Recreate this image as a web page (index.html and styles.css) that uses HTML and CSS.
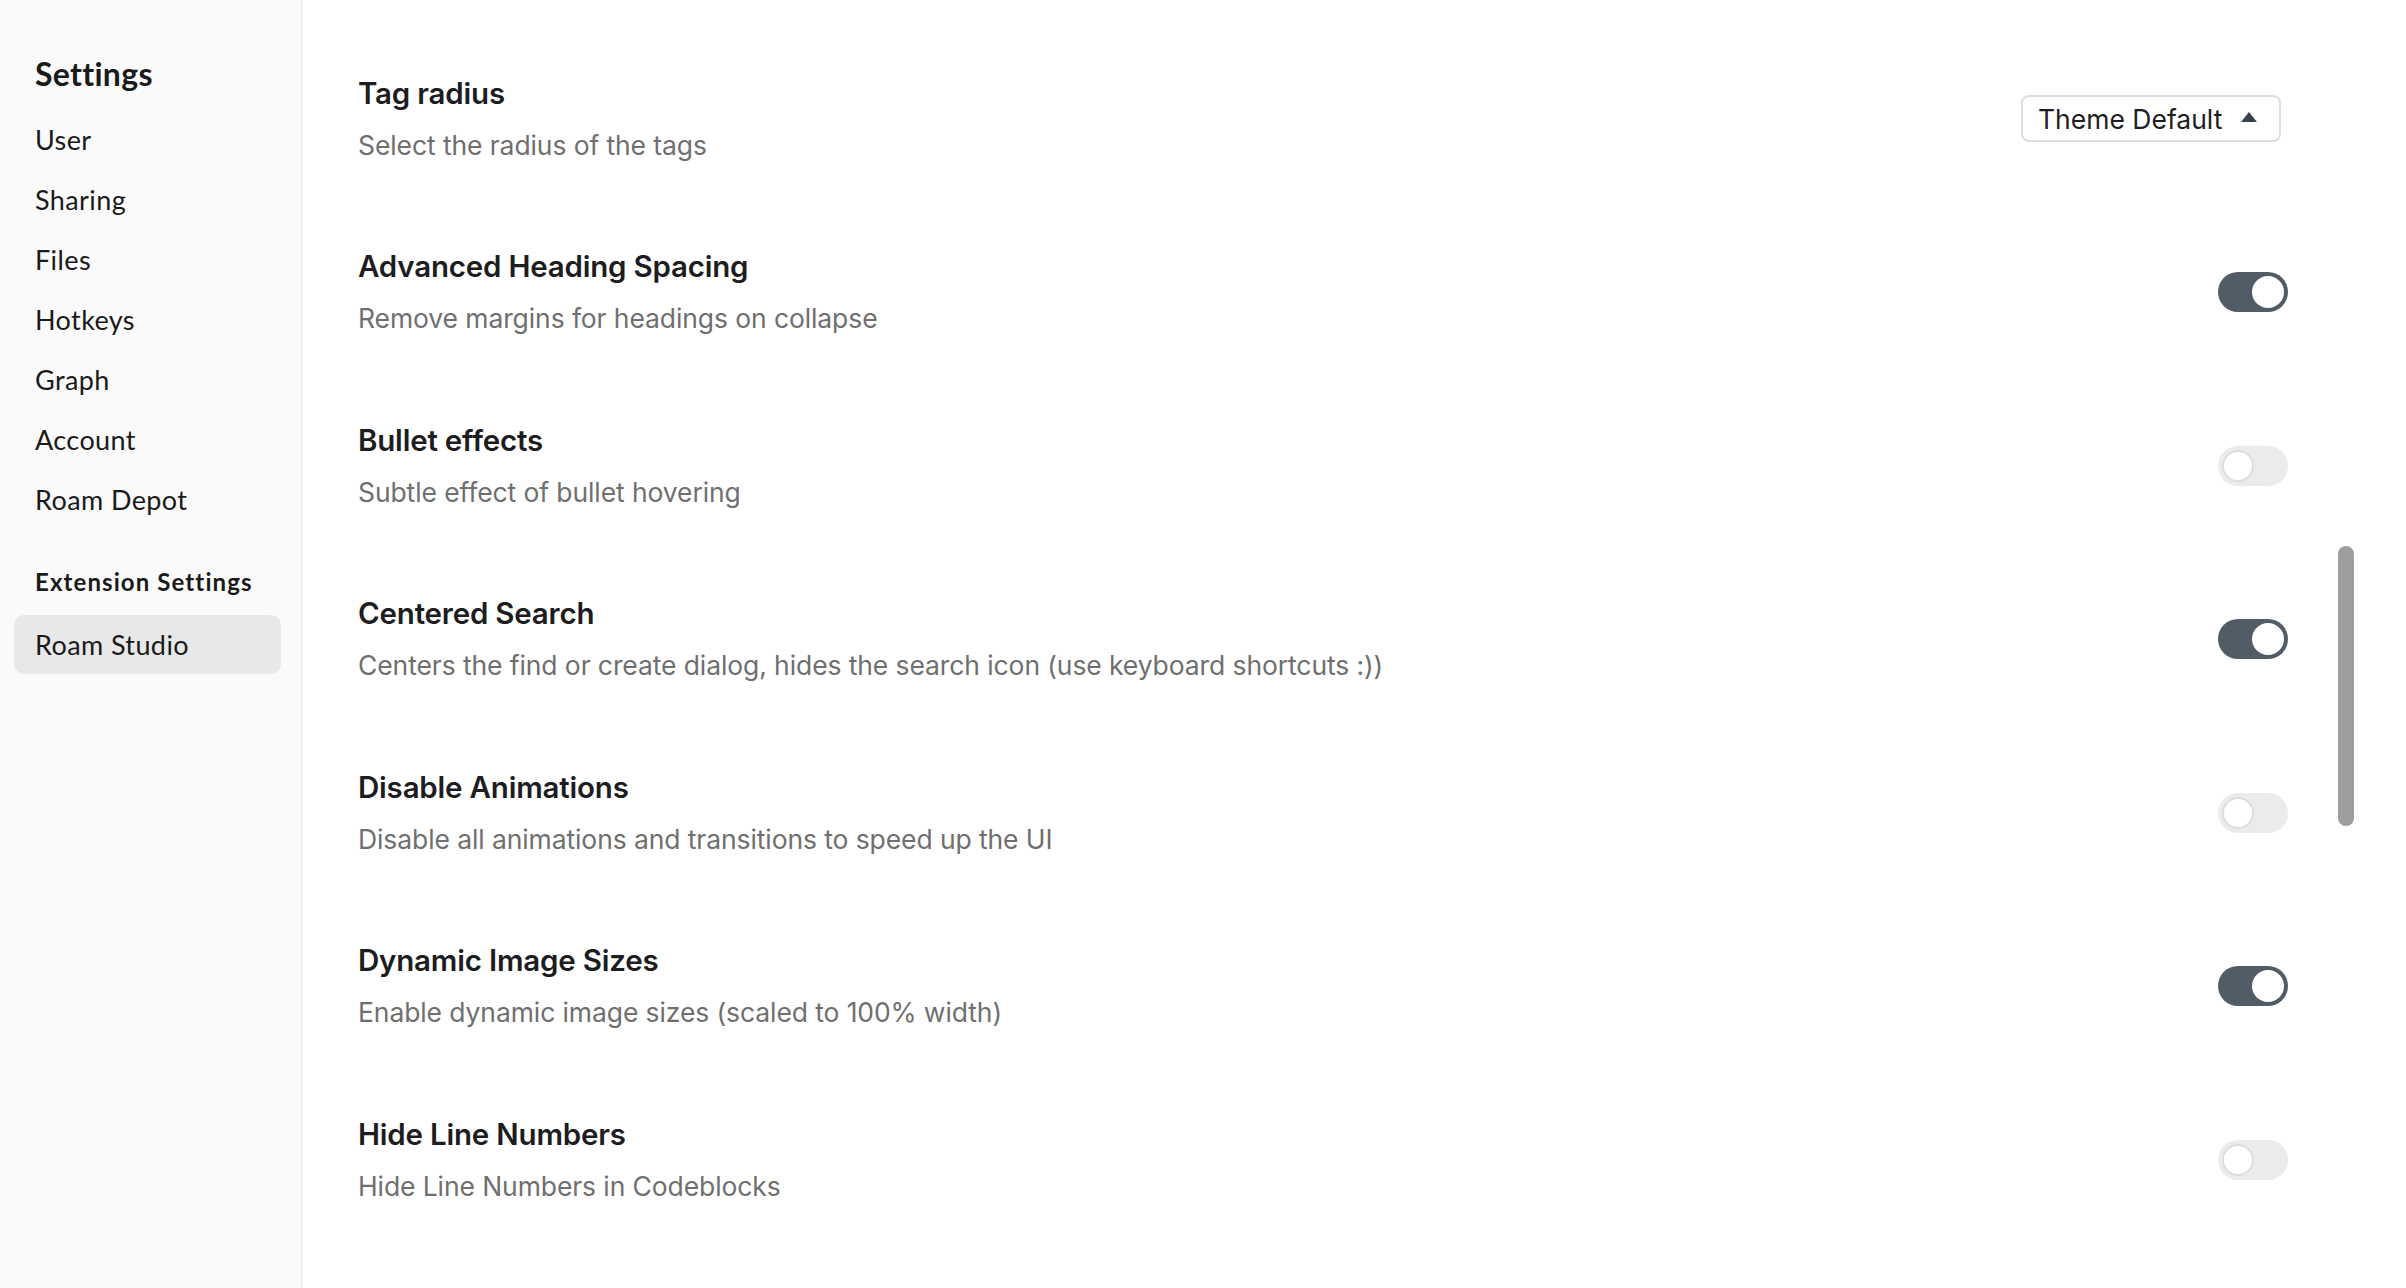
FILE: index.html
```html
<!DOCTYPE html>
<html lang="en">
<head>
<meta charset="utf-8">
<title>Settings</title>
<link rel="stylesheet" href="styles.css">
</head>
<body>
<div class="app">
  <nav class="sidebar">
    <div class="sidebar-title">Settings</div>
    <div class="nav-item">User</div>
    <div class="nav-item">Sharing</div>
    <div class="nav-item">Files</div>
    <div class="nav-item">Hotkeys</div>
    <div class="nav-item">Graph</div>
    <div class="nav-item">Account</div>
    <div class="nav-item">Roam Depot</div>
    <div class="nav-section">Extension Settings</div>
    <div class="nav-item active">Roam Studio</div>
  </nav>
  <main class="content">
    <div class="row">
      <div class="text">
        <div class="title">Tag radius</div>
        <div class="desc">Select the radius of the tags</div>
      </div>
      <div class="select">
        <span>Theme Default</span>
        <span class="caret"></span>
      </div>
    </div>
    <div class="row">
      <div class="text">
        <div class="title">Advanced Heading Spacing</div>
        <div class="desc">Remove margins for headings on collapse</div>
      </div>
      <div class="toggle on"><span class="knob"></span></div>
    </div>
    <div class="row">
      <div class="text">
        <div class="title">Bullet effects</div>
        <div class="desc">Subtle effect of bullet hovering</div>
      </div>
      <div class="toggle"><span class="knob"></span></div>
    </div>
    <div class="row">
      <div class="text">
        <div class="title">Centered Search</div>
        <div class="desc">Centers the find or create dialog, hides the search icon (use keyboard shortcuts :))</div>
      </div>
      <div class="toggle on"><span class="knob"></span></div>
    </div>
    <div class="row">
      <div class="text">
        <div class="title">Disable Animations</div>
        <div class="desc">Disable all animations and transitions to speed up the UI</div>
      </div>
      <div class="toggle"><span class="knob"></span></div>
    </div>
    <div class="row">
      <div class="text">
        <div class="title">Dynamic Image Sizes</div>
        <div class="desc">Enable dynamic image sizes (scaled to 100% width)</div>
      </div>
      <div class="toggle on"><span class="knob"></span></div>
    </div>
    <div class="row">
      <div class="text">
        <div class="title">Hide Line Numbers</div>
        <div class="desc">Hide Line Numbers in Codeblocks</div>
      </div>
      <div class="toggle"><span class="knob"></span></div>
    </div>
    <div class="scroll-thumb"></div>
  </main>
</div>
</body>
</html>
```
FILE: styles.css
```css
html, body {
  margin: 0;
  padding: 0;
  height: 100%;
  background: #ffffff;
}
body {
  font-family: "Inter", "Liberation Sans", sans-serif;
  color: #1d1d1f;
  overflow: hidden;
}
.app {
  display: flex;
  height: 1288px;
}
.sidebar {
  width: 303px;
  flex: 0 0 303px;
  box-sizing: border-box;
  padding: 54px 20px 0 14px;
  background: #fafafa;
  border-right: 2px solid #efefef;
  font-family: "Lato", "Liberation Sans", sans-serif;
}
.sidebar-title {
  font-size: 32px;
  font-weight: 700;
  line-height: 40px;
  height: 56px;
  padding-left: 21px;
  color: #1a1a1a;
  letter-spacing: 0.3px;
}
.nav-item {
  height: 60px;
  line-height: 60px;
  padding-left: 21px;
  font-size: 27px;
  color: #1a1a1a;
  border-radius: 10px;
  width: 267px;
  box-sizing: border-box;
  letter-spacing: 0.4px;
}
.nav-item.active {
  background: #e8e8e8;
  height: 59px;
  line-height: 59px;
}
.nav-section {
  margin-top: 37px;
  margin-bottom: 18px;
  line-height: 30px;
  padding-left: 21px;
  font-size: 24px;
  font-weight: 700;
  color: #1a1a1a;
  letter-spacing: 1.1px;
}
.content {
  position: relative;
  flex: 1;
  padding: 74.5px 118px 0 55px;
  display: flex;
  flex-direction: column;
  gap: 85.5px;
}
.row {
  display: flex;
  align-items: center;
  justify-content: space-between;
}
.text {
  display: flex;
  flex-direction: column;
  gap: 16px;
}
.title {
  font-size: 29.5px;
  font-weight: 600;
  line-height: 36px;
  color: #1d1d1f;
  letter-spacing: -0.2px;
}
.desc {
  font-size: 26.5px;
  line-height: 36px;
  color: #6f6f6f;
  letter-spacing: -0.1px;
}
.select {
  width: 260px;
  height: 47px;
  box-sizing: border-box;
  border: 2px solid #dedede;
  border-radius: 8px;
  margin-right: 7px;
  padding: 0 22px 0 15px;
  display: flex;
  align-items: center;
  justify-content: space-between;
  font-size: 26.5px;
  color: #1d1d1f;
}
.caret {
  width: 0;
  height: 0;
  border-left: 8px solid transparent;
  border-right: 8px solid transparent;
  border-bottom: 10px solid #3a434d;
  margin-bottom: 3px;
}
.toggle {
  width: 70px;
  height: 40px;
  border-radius: 20px;
  background: #ebebeb;
  box-sizing: border-box;
  padding: 4px;
  display: flex;
  align-items: center;
}
.toggle .knob {
  width: 32px;
  height: 32px;
  border-radius: 50%;
  background: #ffffff;
  box-sizing: border-box;
  border: 2px solid #dddddd;
}
.toggle.on {
  background: #525c67;
  justify-content: flex-end;
}
.toggle.on .knob {
  border: none;
}
.scroll-thumb {
  position: absolute;
  left: 2035px;
  top: 546px;
  width: 16px;
  height: 280px;
  border-radius: 8px;
  background: #9d9d9d;
}
```
